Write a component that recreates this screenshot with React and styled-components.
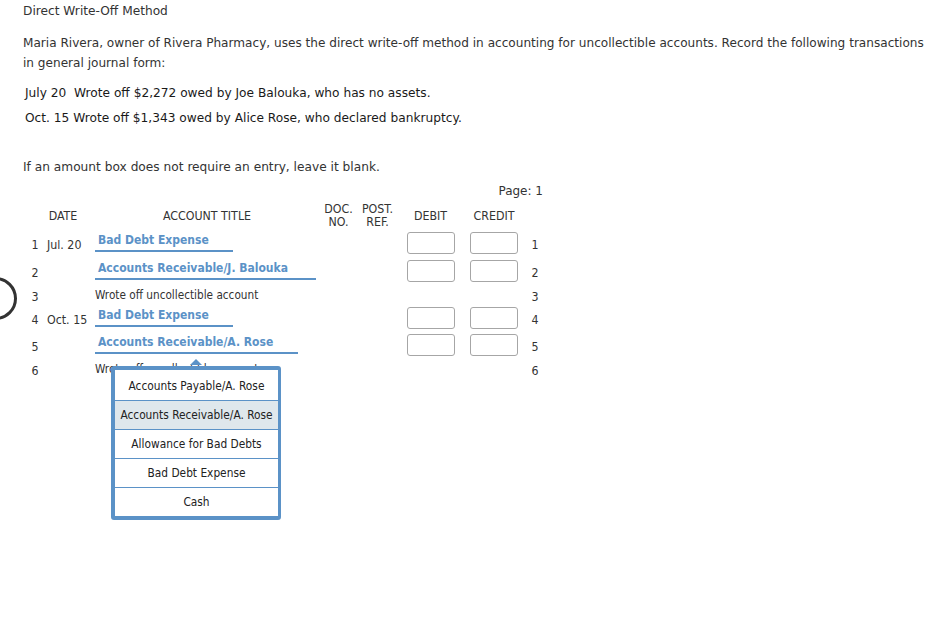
import React from "react";
import styled, { createGlobalStyle } from "styled-components";

const GlobalStyle = createGlobalStyle`
  body {
    margin: 0;
    background: #fff;
    font-family: "DejaVu Sans", Verdana, sans-serif;
    color: #333;
  }
`;

const rows = [
  { n: 1, date: "Jul. 20", kind: "field", text: "Bad Debt Expense", line: 138, h: 28 },
  { n: 2, kind: "field", text: "Accounts Receivable/J. Balouka", line: 221, h: 28 },
  { n: 3, kind: "note", text: "Wrote off uncollectible account", h: 20 },
  { n: 4, date: "Oct. 15", kind: "field", text: "Bad Debt Expense", line: 138, h: 26 },
  { n: 5, kind: "field", text: "Accounts Receivable/A. Rose", line: 203, h: 28, open: true },
  { n: 6, kind: "note", text: "Wrote off uncollectible account", h: 20 },
];

const options = [
  "Accounts Payable/A. Rose",
  "Accounts Receivable/A. Rose",
  "Allowance for Bad Debts",
  "Bad Debt Expense",
  "Cash",
];

export default function App() {
  return (
    <Page>
      <GlobalStyle />
      <Marker />
      <Title>Direct Write-Off Method</Title>
      <Intro>
        Maria Rivera, owner of Rivera Pharmacy, uses the direct write-off method in accounting for uncollectible
        accounts. Record the following transactions in general journal form:
      </Intro>
      <Events>
        <Event>July 20&nbsp;&nbsp;Wrote off $2,272 owed by Joe Balouka, who has no assets.</Event>
        <Event>Oct. 15 Wrote off $1,343 owed by Alice Rose, who declared bankruptcy.</Event>
      </Events>
      <Hint>If an amount box does not require an entry, leave it blank.</Hint>

      <Journal>
        <PageNo>Page: 1</PageNo>
        <HeadRow>
          <span />
          <HeadCell $shift={12}>DATE</HeadCell>
          <HeadCell>ACCOUNT TITLE</HeadCell>
          <HeadCell>DOC.<br />NO.</HeadCell>
          <HeadCell>POST.<br />REF.</HeadCell>
          <HeadCell>DEBIT</HeadCell>
          <HeadCell>CREDIT</HeadCell>
          <span />
        </HeadRow>
        {rows.map((r) => (
          <Row key={r.n} $h={r.h}>
            <Num>{r.n}</Num>
            <DateCell>{r.date}</DateCell>
            {r.kind === "field" ? (
              <AccountCell>
                <Field style={{ width: r.line }}>{r.text}</Field>
                {r.open && (
                  <Menu>
                    {options.map((o) => (
                      <Option key={o} $active={o === r.text}>{o}</Option>
                    ))}
                  </Menu>
                )}
              </AccountCell>
            ) : (
              <Note>{r.text}</Note>
            )}
            <span />
            <span />
            <Amount>{r.kind === "field" && <Box />}</Amount>
            <Amount>{r.kind === "field" && <Box />}</Amount>
            <Num>{r.n}</Num>
          </Row>
        ))}
      </Journal>
    </Page>
  );
}

const Page = styled.div`
  position: relative;
  width: 930px;
  height: 624px;
  padding: 3px 0 0 23px;
  box-sizing: border-box;
  overflow: hidden;
  font-size: 12.2px;
`;

const Marker = styled.div`
  position: absolute;
  left: -26px;
  top: 277px;
  width: 37px;
  height: 37px;
  border: 3px solid #333;
  border-radius: 50%;
`;

const Title = styled.div`
  line-height: 16px;
  color: #333;
`;

const Intro = styled.p`
  margin: 14px 0 0;
  width: 905px;
  font-size: 12.1px;
  line-height: 20px;
  color: #333;
`;

const Events = styled.div`
  margin: 12px 0 0 2px;
  display: flex;
  flex-direction: column;
  gap: 9px;
`;

const Event = styled.div`
  line-height: 16px;
  color: #1a1a1a;
`;

const Hint = styled.div`
  margin-top: 33px;
  line-height: 16px;
  color: #333;
`;

const Journal = styled.div`
  margin: 8px 0 0 3px;
  width: 519px;
  font-family: "DejaVu Sans Condensed", "DejaVu Sans", sans-serif;
  font-size: 12.3px;
  color: #333;
`;

const PageNo = styled.div`
  text-align: right;
  font-family: "DejaVu Sans", sans-serif;
  font-size: 12px;
  line-height: 16px;
  padding-right: 2px;
`;

const cols = "18px 50px 226px 37px 41px 65px 62px 20px";

const HeadRow = styled.div`
  display: grid;
  grid-template-columns: ${cols};
  align-items: center;
  box-sizing: border-box;
  height: 29px;
  padding-top: 3px;
  margin-top: 1px;
`;

const HeadCell = styled.div`
  text-align: center;
  line-height: 13px;
  padding-right: ${(p) => p.$shift || 0}px;
`;

const Row = styled.div`
  display: grid;
  grid-template-columns: ${cols};
  align-items: center;
  height: ${(p) => p.$h}px;
`;

const Num = styled.div`
  text-align: center;
  padding-top: 3px;
`;

const DateCell = styled.div`
  padding: 3px 0 0 3px;
  white-space: nowrap;
`;

const AccountCell = styled.div`
  position: relative;
  padding-left: 1px;
`;

const Field = styled.div`
  box-sizing: border-box;
  border-bottom: 2px solid #5b92c7;
  padding: 0 0 2px 3px;
  margin-bottom: 2px;
  font-weight: bold;
  font-size: 12px;
  line-height: 15px;
  color: #5b92c7;
  white-space: nowrap;
`;

const Note = styled.div`
  padding-left: 1px;
  font-size: 11.7px;
  white-space: nowrap;
`;

const Amount = styled.div`
  display: flex;
  justify-content: center;
`;

const Box = styled.div`
  width: 48px;
  height: 22px;
  box-sizing: border-box;
  border: 1px solid #a6a6a6;
  border-radius: 3px;
  background: #fff;
`;

const Menu = styled.div`
  position: absolute;
  left: 17px;
  top: 31px;
  z-index: 2;
  width: 170px;
  box-sizing: border-box;
  padding-top: 2px;
  border: 4px solid #5b92c7;
  border-right-width: 3px;
  border-radius: 3px;
  background: #fff;

  &::before {
    content: "";
    position: absolute;
    left: 75px;
    top: -11px;
    border: 6px solid transparent;
    border-bottom-color: #5b92c7;
    border-top-width: 0;
  }
`;

const Option = styled.div`
  height: 28px;
  line-height: 28px;
  text-align: center;
  font-size: 11.8px;
  color: #222;
  background: ${(p) => (p.$active ? "#dfe7ec" : "#fff")};
  border-top: 1px solid #5b92c7;

  &:first-child {
    border-top: none;
  }
`;
